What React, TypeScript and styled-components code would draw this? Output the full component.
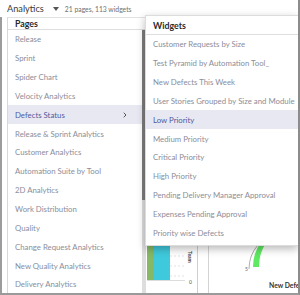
import React from 'react';
import styled, { createGlobalStyle } from 'styled-components';
import { ChevronRight } from 'lucide-react';

const GlobalStyle = createGlobalStyle`
  body {
    margin: 0;
    background: #fff;
    font-family: Lato, "Open Sans", sans-serif;
  }
`;

const Root = styled.div`
  position: relative;
  width: 300px;
  height: 295px;
  box-sizing: border-box;
  border-right: 2px solid #8c8c8c;
  border-bottom: 2px solid #9a9a9a;
  overflow: hidden;
  background: #fff;
  display: flex;
  flex-direction: column;
`;

const Header = styled.header`
  display: flex;
  align-items: center;
  height: 17px;
  padding-left: 7px;
  flex-shrink: 0;
`;

const Title = styled.span`
  font-size: 9.2px;
  color: #3a3a3a;
`;

const Caret = styled.span`
  width: 0;
  height: 0;
  margin-left: 9px;
  border-left: 3px solid transparent;
  border-right: 3px solid transparent;
  border-top: 4px solid #555;
`;

const Meta = styled.span`
  margin-left: 6px;
  font-size: 6.8px;
  color: #707070;
`;

const Dashboard = styled.main`
  flex: 1;
  border-left: 2px solid #9c9c9c;
  display: flex;
  flex-direction: column;
  justify-content: flex-end;
`;

const ChartRow = styled.div`
  display: flex;
  height: 50px;
  padding-left: 143px;
  gap: 10px;
`;

const BarCard = styled.div`
  width: 52px;
  border-right: 1px solid #cfcfcf;
`;

const GaugeCard = styled.div`
  flex: 1;
  border-left: 1px solid #d4d4d4;
`;

const PagesMenu = styled.nav`
  position: absolute;
  left: 7px;
  top: 17px;
  bottom: 0;
  width: 139px;
  box-sizing: border-box;
  background: #fff;
  border-left: 1px solid #d8d8d8;
  border-top: 1px solid #e2e2e2;
  display: flex;
  flex-direction: column;
`;

const WidgetsMenu = styled.nav`
  position: absolute;
  left: 145px;
  top: 15px;
  width: 153px;
  box-sizing: border-box;
  background: #fff;
  border: 1px solid #dcdcdc;
  border-right: none;
  padding-bottom: 3px;
  box-shadow: 0 3px 8px rgba(0, 0, 0, 0.28);
  display: flex;
  flex-direction: column;
`;

const MenuHeader = styled.div<{ $h: number }>`
  height: ${(p) => p.$h}px;
  box-sizing: border-box;
  display: flex;
  align-items: center;
  padding-left: 7px;
  font-size: 8.8px;
  font-weight: 700;
  color: #2a2a2a;
  border-bottom: 1px solid #dedede;
`;

const List = styled.div`
  position: relative;
  flex: 1;
`;

const Item = styled.div<{ $active?: boolean }>`
  height: 18.85px;
  display: flex;
  align-items: center;
  justify-content: space-between;
  padding: 0 17px 0 7px;
  font-size: 7.8px;
  white-space: nowrap;
  color: ${(p) => (p.$active ? '#515a9c' : '#8a8e9b')};
  background: ${(p) => (p.$active ? '#e8e8f2' : 'transparent')};
`;

const ScrollTrack = styled.div`
  position: absolute;
  right: 0;
  top: 0;
  bottom: 0;
  width: 4px;
  background: #dedede;
`;

const ScrollThumb = styled.div`
  height: 170px;
  background: #7d7d7d;
`;

const pages = [
  'Release',
  'Sprint',
  'Spider Chart',
  'Velocity Analytics',
  'Defects Status',
  'Release & Sprint Analytics',
  'Customer Analytics',
  'Automation Suite by Tool',
  '2D Analytics',
  'Work Distribution',
  'Quality',
  'Change Request Analytics',
  'New Quality Analytics',
  'Delivery Analytics',
];

const widgets = [
  'Customer Requests by Size',
  'Test Pyramid by Automation Tool_',
  'New Defects This Week',
  'User Stories Grouped by Size and Module',
  'Low Priority',
  'Medium Priority',
  'Critical Priority',
  'High Priority',
  'Pending Delivery Manager Approval',
  'Expenses Pending Approval',
  'Priority wise Defects',
];

const BarChart = () => (
  <svg width="52" height="50" viewBox="0 0 52 50">
    <rect x="2" y="0" width="8" height="37" fill="#86b865" />
    <rect x="9" y="0" width="16" height="37" fill="#3fc9dc" />
    {[13, 23, 33].map((y) => (
      <line key={y} x1="25" x2="40" y1={y} y2={y} stroke="#e2e2e2" strokeDasharray="2 2" />
    ))}
    <line x1="2" x2="40" y1="37.5" y2="37.5" stroke="#dcdcdc" />
    <text x="0" y="0" fontSize="5" fontWeight="700" fill="#444" fontFamily="Lato, sans-serif" transform="translate(43 8) rotate(90)">
      Team
    </text>
    <text x="44" y="41" fontSize="5" fill="#555" fontFamily="Lato, sans-serif">
      0
    </text>
  </svg>
);

const Gauge = () => (
  <svg width="90" height="50" viewBox="0 0 90 50">
    <path d="M49 2 Q40 12 40 26" fill="none" stroke="#9a9a9a" strokeWidth="0.8" />
    <path d="M57 0 Q50 10 50 24 L44 24 Q44 9 53 -2 Z" fill="#5fe862" />
    <path d="M54 -2 Q55 1 57 1 L59 -3 Z" fill="#e0a24a" />
    <text x="36" y="28" fontSize="5" fill="#666" fontFamily="Lato, sans-serif">
      5
    </text>
    <text x="60" y="45" fontSize="6.8" fontWeight="700" fill="#333" fontFamily="Lato, sans-serif">
      New Defe
    </text>
  </svg>
);

export default function App() {
  return (
    <Root>
      <GlobalStyle />
      <Header>
        <Title>Analytics</Title>
        <Caret />
        <Meta>21 pages, 113 widgets</Meta>
      </Header>
      <Dashboard>
        <ChartRow>
          <BarCard>
            <BarChart />
          </BarCard>
          <GaugeCard>
            <Gauge />
          </GaugeCard>
        </ChartRow>
      </Dashboard>

      <PagesMenu>
        <MenuHeader $h={17}>Pages</MenuHeader>
        <List>
          {pages.map((p) => (
            <Item key={p} $active={p === 'Defects Status'}>
              {p}
              {p === 'Defects Status' && <ChevronRight size={8} strokeWidth={3} color="#555" />}
            </Item>
          ))}
          <ScrollTrack>
            <ScrollThumb />
          </ScrollTrack>
        </List>
      </PagesMenu>

      <WidgetsMenu>
        <MenuHeader $h={19}>Widgets</MenuHeader>
        {widgets.map((w) => (
          <Item key={w} $active={w === 'Low Priority'}>
            {w}
          </Item>
        ))}
      </WidgetsMenu>
    </Root>
  );
}
